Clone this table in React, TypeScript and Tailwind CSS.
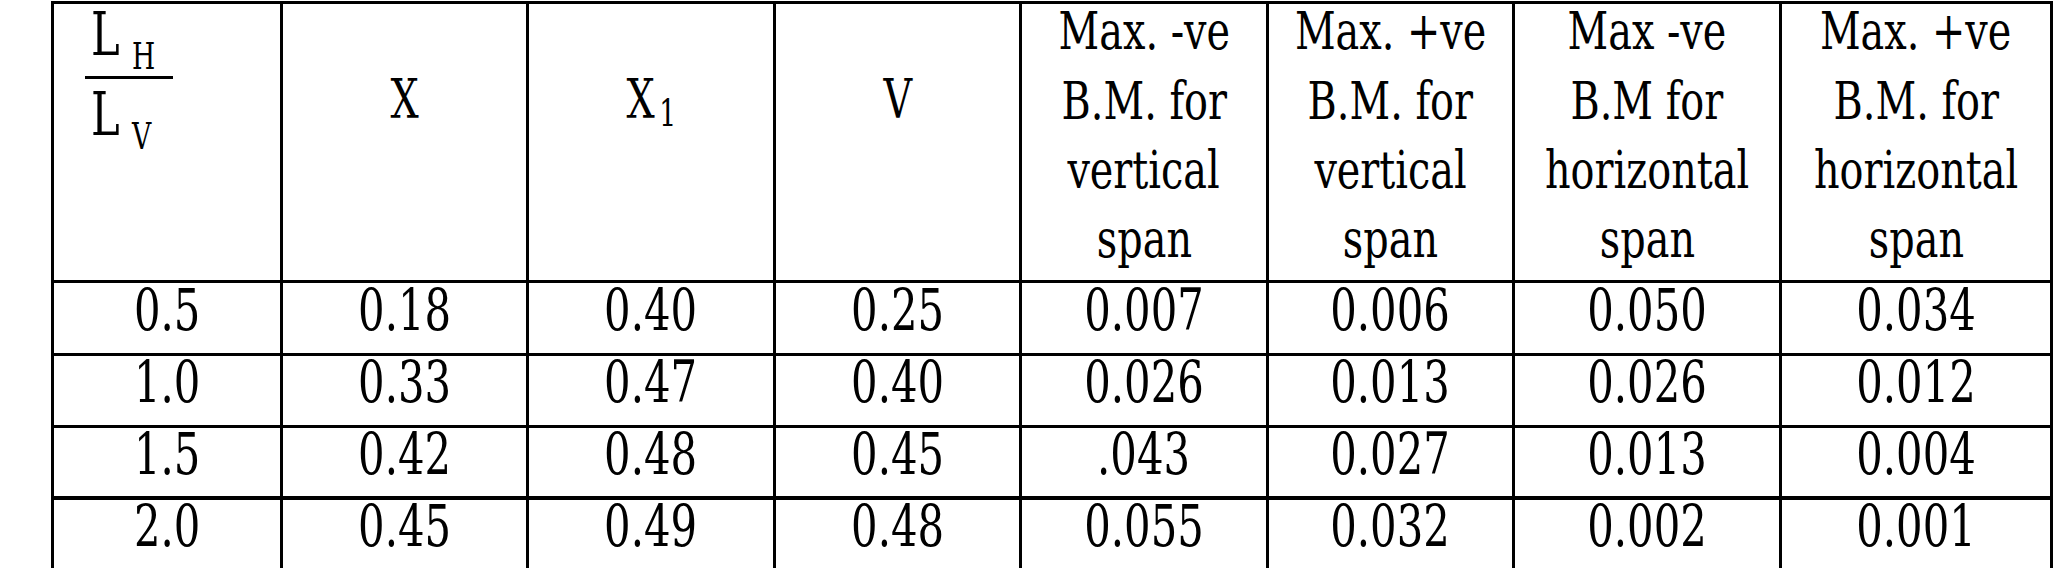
const serif = { fontFamily: '"DejaVu Serif", "Liberation Serif", serif' }

const cols = 'grid-cols-[229px_246px_247px_246px_247px_246px_267px_271px]'

const rows = [
  ['0.5', '0.18', '0.40', '0.25', '0.007', '0.006', '0.050', '0.034'],
  ['1.0', '0.33', '0.47', '0.40', '0.026', '0.013', '0.026', '0.012'],
  ['1.5', '0.42', '0.48', '0.45', '.043', '0.027', '0.013', '0.004'],
  ['2.0', '0.45', '0.49', '0.48', '0.055', '0.032', '0.002', '0.001'],
]

const heads = [
  ['Max. -ve', 'B.M. for', 'vertical', 'span'],
  ['Max. +ve', 'B.M. for', 'vertical', 'span'],
  ['Max -ve', 'B.M for', 'horizontal', 'span'],
  ['Max. +ve', 'B.M. for', 'horizontal', 'span'],
]

function Narrow({ children, className = 'scale-x-[0.72]' }: { children: React.ReactNode; className?: string }) {
  return <span className={`inline-block whitespace-nowrap ${className}`}>{children}</span>
}

function Fraction() {
  return (
    <div className="ml-[31px] w-[88px] pt-[3px]">
      <div className="h-[54px] whitespace-nowrap pl-[6px] text-[60px] leading-[54px]">
        <span className="inline-block origin-left scale-x-[0.72]">L</span>
        <span className="relative top-[14px] ml-[1px] inline-block origin-left scale-x-[0.72] text-[37px]">H</span>
      </div>
      <div className="mt-[15px] h-[3px] bg-black" />
      <div className="mt-[8px] h-[54px] whitespace-nowrap pl-[6px] text-[60px] leading-[54px]">
        <span className="inline-block origin-left scale-x-[0.72]">L</span>
        <span className="relative top-[14px] ml-[1px] inline-block origin-left scale-x-[0.72] text-[37px]">V</span>
      </div>
    </div>
  )
}

function HeadSymbol({ main, sub }: { main: string; sub?: string }) {
  return (
    <div className="pt-[61px] text-center text-[55px] leading-[69px]">
      <Narrow>
        {main}
        {sub && <span className="relative top-[8px] ml-[6px] text-[37px]">{sub}</span>}
      </Narrow>
    </div>
  )
}

export default function App() {
  return (
    <div className="h-[568px] w-[2070px] overflow-hidden bg-white text-black" style={serif}>
      <div className={`ml-[51px] mt-[1px] grid w-[2002px] ${cols} grid-rows-[279px_73px_72px_72px_72px] border-l-[3px] border-t-[3px] border-black`}>
        <div className="border-b-[3px] border-r-[3px] border-black">
          <Fraction />
        </div>
        <div className="border-b-[3px] border-r-[3px] border-black">
          <HeadSymbol main="X" />
        </div>
        <div className="border-b-[3px] border-r-[3px] border-black">
          <HeadSymbol main="X" sub="1" />
        </div>
        <div className="border-b-[3px] border-r-[3px] border-black">
          <HeadSymbol main="V" />
        </div>
        {heads.map((lines, i) => (
          <div key={i} className="border-b-[3px] border-r-[3px] border-black">
            <div className="flex flex-col items-center text-[53px] leading-[69px]">
              {lines.map((l, j) => (
                <Narrow
                  key={l}
                  className={`scale-x-[0.75] ${j === 0 ? 'leading-[54px]' : j === 1 ? 'mt-[8px]' : ''}`}
                >
                  {l}
                </Narrow>
              ))}
            </div>
          </div>
        ))}
        {rows.map((row, r) =>
          row.map((v, c) => (
            <div
              key={`${r}-${c}`}
              className={`border-r-[3px] border-black text-center text-[58px] ${r === 2 ? 'border-b-[4px]' : 'border-b-[3px]'} ${r === 0 ? 'leading-[54px]' : 'leading-[52px]'}`}
            >
              <Narrow>{v}</Narrow>
            </div>
          ))
        )}
      </div>
    </div>
  )
}
